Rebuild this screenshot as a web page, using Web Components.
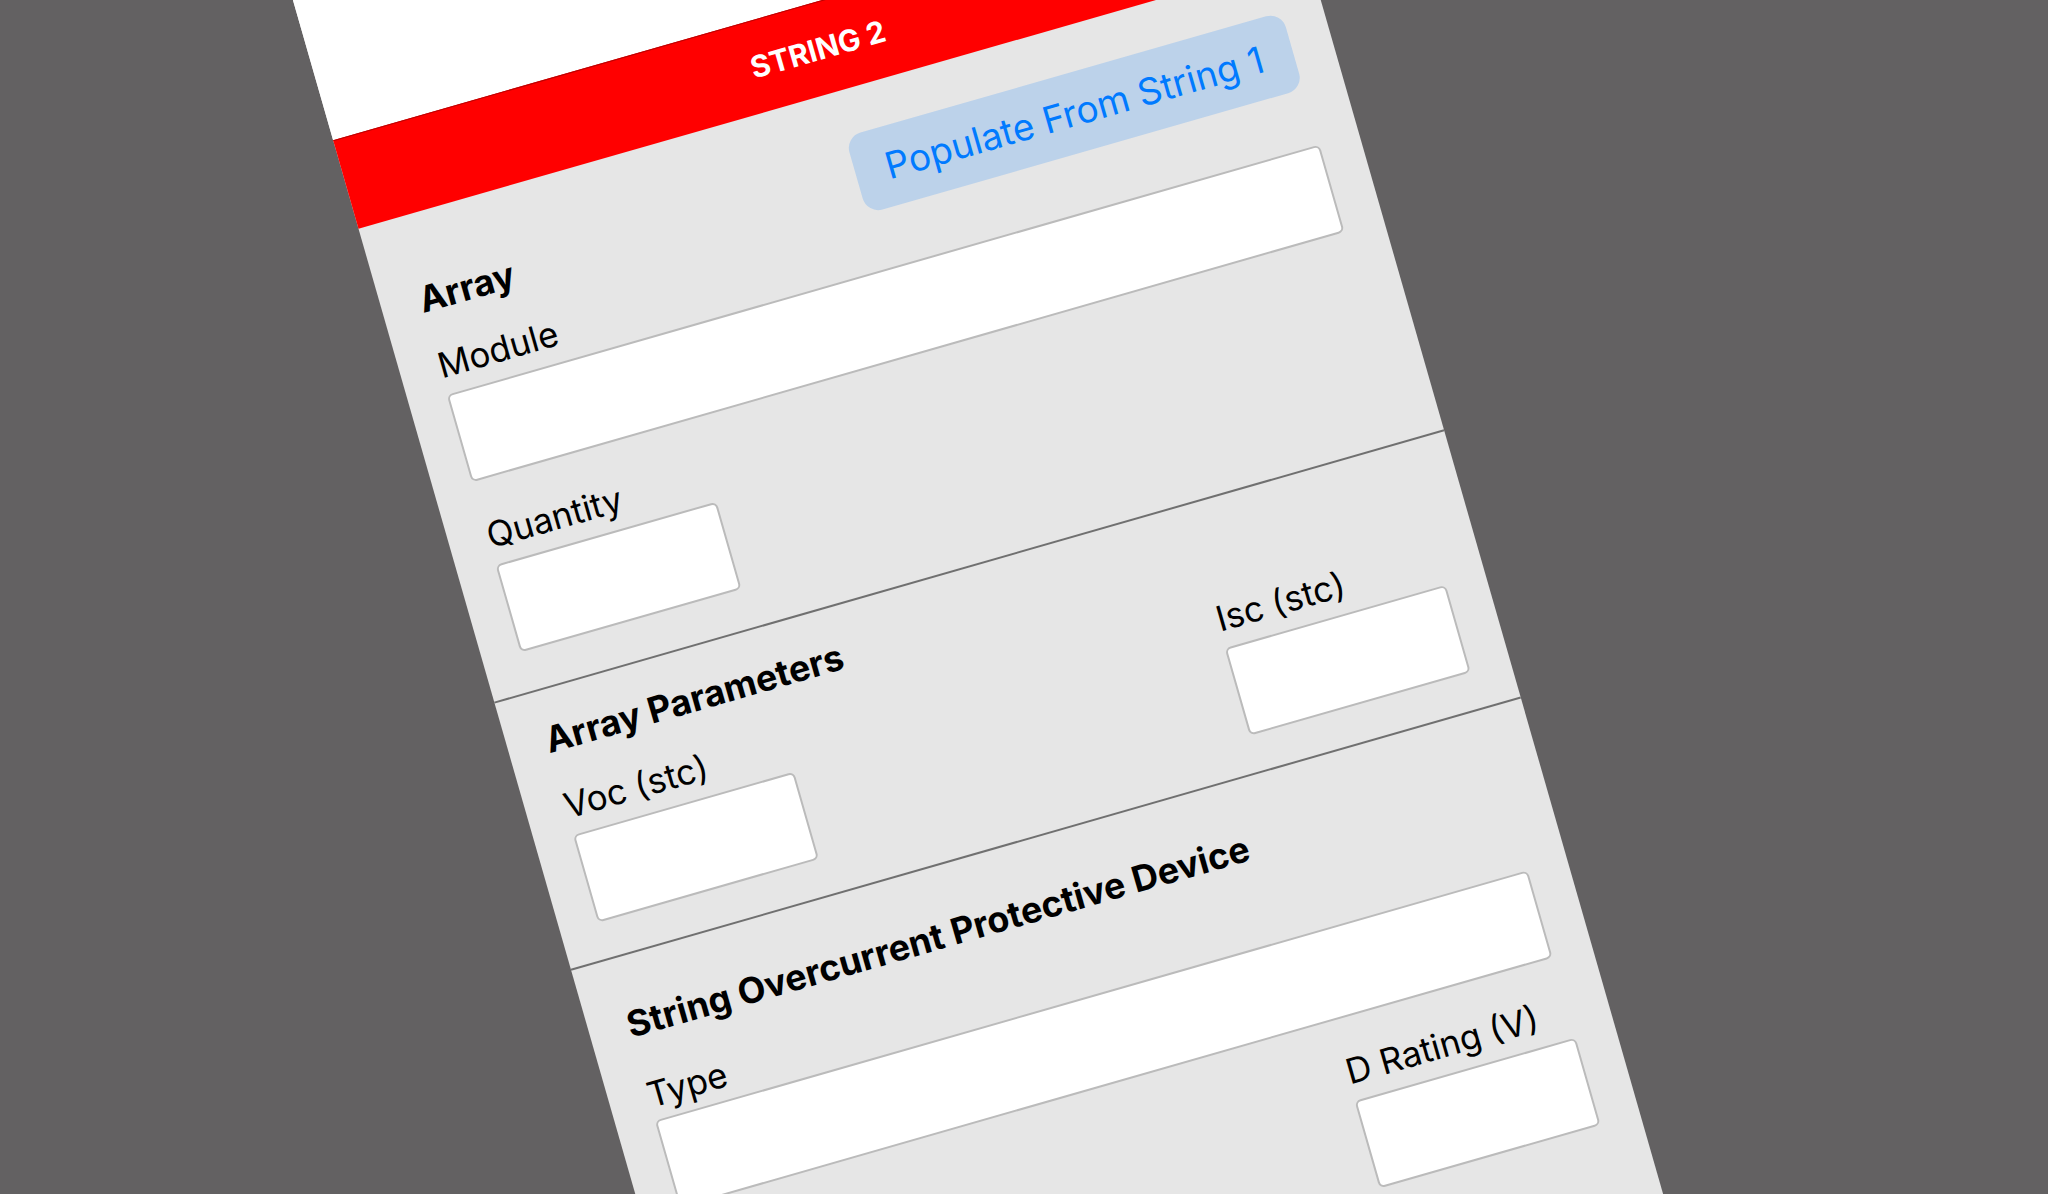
<!DOCTYPE html>
<html lang="en">
<head>
<meta charset="utf-8">
<title>String 2</title>
<style>
  html, body { margin: 0; height: 100%; }
  body { background: #636162; color: #000; font-family: Inter, "Liberation Sans", sans-serif; overflow: hidden; }
</style>
</head>
<body>
<tilted-stage>
  <form-sheet>
    <title-bar>STRING 2</title-bar>
    <form-section class="array">
      <section-head>Array<populate-button slot="action">Populate From String 1</populate-button></section-head>
      <text-field label="Module" class="after-head"></text-field>
      <text-field label="Quantity" short></text-field>
    </form-section>
    <form-section class="params">
      <section-head>Array Parameters</section-head>
      <field-row>
        <text-field label="Voc (stc)" short></text-field>
        <text-field label="Isc (stc)" short></text-field>
      </field-row>
    </form-section>
    <form-section class="device">
      <section-head>String Overcurrent Protective Device</section-head>
      <text-field label="Type" tight></text-field>
      <field-row class="end">
        <text-field label="D Rating (V)" short></text-field>
      </field-row>
    </form-section>
  </form-sheet>
</tilted-stage>

<script>
  const define = (name, html, setup) => {
    const template = document.createElement('template');
    template.innerHTML = html;
    customElements.define(name, class extends HTMLElement {
      constructor() {
        super();
        this.attachShadow({ mode: 'open' }).append(template.content.cloneNode(true));
      }
      connectedCallback() { if (setup) setup(this, this.shadowRoot); }
    });
  };

  define('tilted-stage', `
    <style>
      :host { display: flow-root; height: 100vh; overflow: hidden; box-sizing: border-box; padding-left: 278px; }
      main { display: block; width: 48.25vw; margin-top: -52px; transform: rotate(-16deg); transform-origin: 0 0; }
    </style>
    <main><slot></slot></main>`);

  define('form-sheet', `
    <style>
      :host { display: flex; flex-direction: column; background: #e6e6e6; }
      header { height: 200px; background: #fff; }
    </style>
    <header></header><slot></slot>`);

  define('title-bar', `
    <style>
      :host { display: block; background: #f00; border-top: 1px solid #b00; color: #fff; }
      h1 { margin: 0; padding: 27px 6px 28px 0; font-size: 30px; line-height: 36px; font-weight: 700; text-align: center; }
    </style>
    <h1><slot></slot></h1>`);

  define('form-section', `
    <style>
      :host { display: flex; flex-direction: column; padding: 46px 41px 40px 39px; border-bottom: 2px solid #707070; gap: 36px; }
      :host(.array) ::slotted(.after-head) { margin-top: -28px; }
      :host(.params) { padding-top: 30px; padding-bottom: 37px; gap: 28px; }
      :host(.device) { padding-top: 48px; padding-bottom: 240px; gap: 33px; border-bottom: 0; }
    </style>
    <slot></slot>`);

  define('section-head', `
    <style>
      :host { display: flex; align-items: center; justify-content: space-between; }
      h2 { margin: 0; font-size: 36px; line-height: 40px; font-weight: 700; white-space: nowrap; }
    </style>
    <h2><slot></slot></h2><slot name="action"></slot>`);

  define('populate-button', `
    <style>
      :host { display: block; }
      button { display: block; border: 0; border-radius: 16px; padding: 16px 31px; background: #bcd2ea; color: #007aff;
               font: 400 37px/48px Inter, "Liberation Sans", sans-serif; white-space: nowrap; }
    </style>
    <button type="button"><slot></slot></button>`);

  define('field-row', `
    <style>
      :host { display: flex; justify-content: space-between; }
      :host(.end) { justify-content: flex-end; }
    </style>
    <slot></slot>`);

  define('text-field', `
    <style>
      :host { display: flex; flex-direction: column; gap: 10px; }
      :host([tight]) { gap: 6px; }
      :host([short]) { width: 230px; }
      label { font-size: 35px; line-height: 40px; white-space: nowrap; }
      input { box-sizing: border-box; width: 100%; height: 91px; margin: 0; padding: 0 20px; border: 2px solid #bbb;
              border-radius: 6px; background: #fff; color: #000; font: inherit; font-size: 35px; outline: 0; }
    </style>
    <label for="box"></label><input id="box" type="text">`,
    (host, root) => { root.querySelector('label').textContent = host.getAttribute('label'); });
</script>
</body>
</html>
